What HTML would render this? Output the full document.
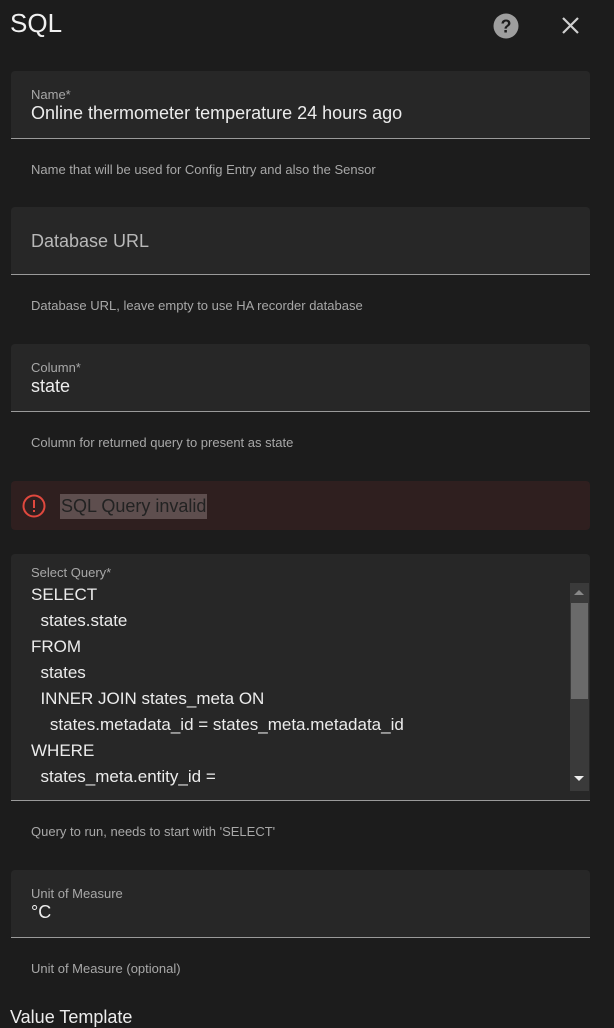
<!DOCTYPE html>
<html><head><style>
body{margin:0;width:614px;height:1024px;overflow:hidden;background:#1c1c1c;font-family:"Liberation Sans",sans-serif;color:#e1e1e1;position:relative}
.a{position:absolute}
.f{position:absolute;left:11px;width:579px;background:#272727;border-radius:4px 4px 0 0;border-bottom:1px solid #9a9a9a}
.lb{position:absolute;left:20px;font-size:13px;color:#a8a8a8}
.v{position:absolute;left:20px;font-size:18px;color:#ececec}
.h{position:absolute;left:31px;font-size:13px;color:#a8a8a8}
.q{position:absolute;left:20px;font-size:17px;line-height:26px;color:#ececec;white-space:pre}
</style></head><body>
<div class="a" style="left:10px;top:8px;font-size:26px;color:#f0f0f0">SQL</div>
<svg class="a" style="left:493px;top:13px" width="26" height="26" viewBox="0 0 26 26"><circle cx="13" cy="13" r="12.5" fill="#9e9e9e"/><text x="13" y="19.5" text-anchor="middle" font-family="Liberation Sans" font-weight="bold" font-size="18" fill="#1c1c1c">?</text></svg>
<svg class="a" style="left:561px;top:16px" width="19" height="19" viewBox="0 0 19 19"><path d="M2 2L17 17M17 2L2 17" stroke="#d0d0d0" stroke-width="2.2"/></svg>

<div class="f" style="top:71px;height:67px"><div class="lb" style="top:16px">Name*</div><div class="v" style="top:32px">Online thermometer temperature 24 hours ago</div></div>
<div class="h" style="top:162px">Name that will be used for Config Entry and also the Sensor</div>

<div class="f" style="top:207px;height:67px"><div class="v" style="top:24px;color:#b8b8b8">Database URL</div></div>
<div class="h" style="top:298px">Database URL, leave empty to use HA recorder database</div>

<div class="f" style="top:344px;height:67px"><div class="lb" style="top:16px">Column*</div><div class="v" style="top:32px">state</div></div>
<div class="h" style="top:435px">Column for returned query to present as state</div>

<div class="a" style="left:11px;top:481px;width:579px;height:49px;background:#2f1f1f;border-radius:4px"></div>
<svg class="a" style="left:22px;top:494px" width="24" height="24" viewBox="0 0 24 24"><circle cx="12" cy="12" r="10.5" fill="none" stroke="#e0483e" stroke-width="2"/><rect x="11" y="6" width="2" height="8" fill="#e0483e"/><rect x="11" y="16" width="2" height="2" fill="#e0483e"/></svg>
<div class="a" style="left:60px;top:494px;height:25px;padding:0 1px;background:#5e4e4e;color:#222;font-size:18px;line-height:25px">SQL Query invalid</div>

<div class="f" style="top:554px;height:246px"><div class="lb" style="top:11px">Select Query*</div>
<div class="q" style="top:28px">SELECT
  states.state
FROM
  states
  INNER JOIN states_meta ON
    states.metadata_id = states_meta.metadata_id
WHERE
  states_meta.entity_id =</div>
<div class="a" style="left:559px;top:29px;width:19px;height:208px;background:#3a3a3a"></div>
<div class="a" style="left:560px;top:49px;width:17px;height:96px;background:#6a6a6a"></div>
<div class="a" style="left:563px;top:36px;width:0;height:0;border-left:5px solid transparent;border-right:5px solid transparent;border-bottom:5px solid #888"></div>
<div class="a" style="left:563px;top:222px;width:0;height:0;border-left:5px solid transparent;border-right:5px solid transparent;border-top:5px solid #eee"></div>
</div>
<div class="h" style="top:824px">Query to run, needs to start with 'SELECT'</div>

<div class="f" style="top:870px;height:67px"><div class="lb" style="top:16px">Unit of Measure</div><div class="v" style="top:32px">°C</div></div>
<div class="h" style="top:961px">Unit of Measure (optional)</div>

<div class="a" style="left:10px;top:1007px;font-size:18px;color:#ececec">Value Template</div>
</body></html>
